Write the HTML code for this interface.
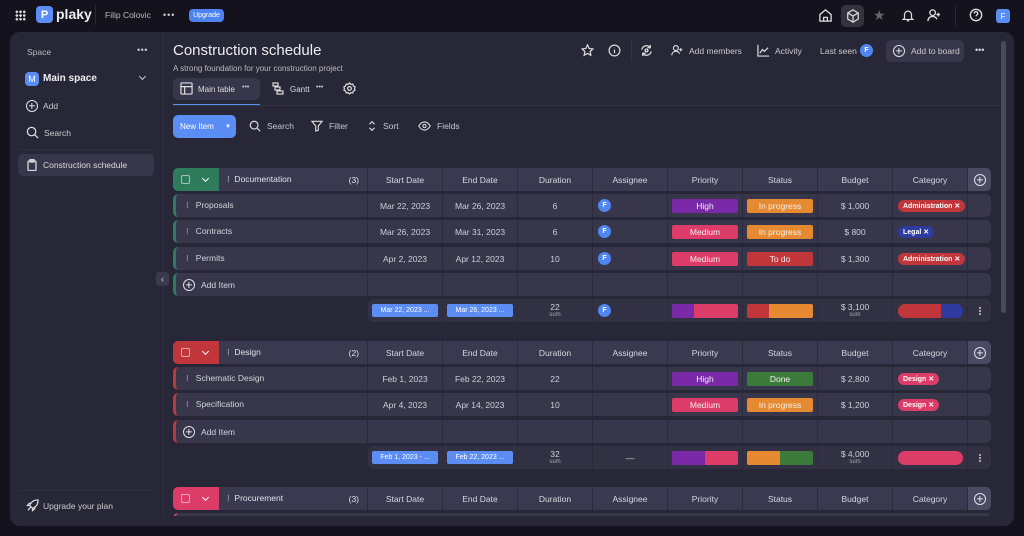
<!DOCTYPE html>
<html><head><meta charset="utf-8"><style>
*{margin:0;padding:0;box-sizing:border-box}
body{width:1024px;height:536px;background:#14131d;font-family:"Liberation Sans",sans-serif;color:#d4d4dc;position:relative;overflow:hidden;font-size:9px;white-space:nowrap}
.a{position:absolute}
.panel{left:10px;top:32px;width:1004px;height:494px;background:#272737;border-radius:10px;overflow:hidden}
.row{position:absolute;left:173px;width:818px;height:23px;background:#37364a;border-radius:5px;display:flex;overflow:hidden}
.row .c{width:75px;border-right:1px solid #2c2b3c;display:flex;align-items:center;justify-content:center;color:#cfcfd8;font-size:8.5px}
.row .n{width:192px;border-right:1px solid #2c2b3c;display:flex;align-items:center;padding-left:10px;color:#d4d4dc;font-size:8.5px}
.row .e{flex:1}
.hdr{position:absolute;left:173px;width:818px;height:23px;background:#3a394f;border-radius:5px;display:flex;overflow:hidden}
.hdr .cb{width:46px;display:flex;align-items:center;padding-left:8px;gap:13px}
.hdr .cb i{display:block;width:9px;height:9px;border:1px solid rgba(255,255,255,.55);border-radius:2px}
.hdr .cb b{display:block;width:5px;height:5px;border-right:1.5px solid #fff;border-bottom:1.5px solid #fff;transform:rotate(45deg);margin-top:-3px}
.hdr .nm{width:149px;border-right:1px solid #2c2b3c;display:flex;align-items:center;padding-left:8px;font-size:8.5px;color:#e2e2ea}
.hdr .nm span{margin-left:auto;margin-right:8px}
.hdr .c{width:75px;border-right:1px solid #2c2b3c;display:flex;align-items:center;justify-content:center;font-size:8.5px;color:#d8d8e0}
.hdr .p{flex:1;background:#4b4a62;display:flex;align-items:center;justify-content:center}
.plus{width:12px;height:12px;border:1.3px solid #e0e0e8;border-radius:50%;position:relative;flex:none}
.plus:before,.plus:after{content:"";position:absolute;background:#e0e0e8;left:50%;top:50%;transform:translate(-50%,-50%)}
.plus:before{width:6px;height:1.3px}.plus:after{width:1.3px;height:6px}
.pill{width:66px;height:14px;border-radius:2px;display:flex;align-items:center;justify-content:center;color:#f2f2f2;font-size:8.5px}
.av{width:13px;height:13px;border-radius:50%;background:#4f86f0;color:#fff;font-size:7px;display:flex;align-items:center;justify-content:center;font-weight:bold}
.tag{height:12px;border-radius:6px;padding:0 5px;display:inline-flex;align-items:center;color:#fff;font-size:7px;font-weight:bold}
.row .cat{justify-content:flex-start;padding-left:5px}
.sum{position:absolute;left:368px;width:623px;height:23px;background:#323144;border-radius:5px;display:flex}
.sum .c{width:75px;display:flex;align-items:center;justify-content:center;flex-direction:column;font-size:8.5px;color:#cfcfd8;line-height:8px;border-right:1px solid #2c2b3c}
.sum .c small{font-size:6px;color:#a8a8b4}
.db{width:66px;height:13px;background:#5b8df3;border-radius:2px;color:#fff;font-size:7px;display:flex;align-items:center;justify-content:center}
.bar{width:66px;height:14px;border-radius:2px;display:flex;overflow:hidden}
.dots{width:2px;height:2px;background:#ccc;border-radius:50%;box-shadow:0 -3px 0 #ccc,0 3px 0 #ccc}
.tb{display:flex;align-items:center;gap:6px;color:#c8c8d2;font-size:8.5px}
</style></head><body>
<div class="a" style="left:15px;top:10px;width:11px;height:11px;background:radial-gradient(circle,#ddd 1.2px,transparent 1.4px) 0 0/3.7px 3.7px"></div>
<div class="a" style="left:36px;top:6px;width:17px;height:17px;background:#5a8ef5;border-radius:4px;color:#fff;font-size:11px;font-weight:bold;display:flex;align-items:center;justify-content:center">P</div>
<div class="a" style="left:56px;top:6px;font-size:14px;color:#eee;font-weight:bold">plaky</div>
<div class="a" style="left:95px;top:5px;width:1px;height:20px;background:#2a2936"></div>
<div class="a" style="left:105px;top:10px;font-size:8.5px;color:#bbb">Filip Colovic</div>
<div class="a" style="left:163px;top:10px;font-size:9px;color:#ccc;letter-spacing:1px">•••</div>
<div class="a" style="left:189px;top:9px;width:35px;height:13px;background:#4d83ee;border-radius:4px;font-size:7px;color:#fff;display:flex;align-items:center;justify-content:center">Upgrade</div>
<svg class="a" style="left:818px;top:8px" width="15" height="15" viewBox="0 0 16 16" fill="none" stroke="#ddd" stroke-width="1.4"><path d="M2 7l6-5 6 5v7H2z M6 14v-4h4v4"/></svg>
<div class="a" style="left:841px;top:5px;width:23px;height:22px;background:#33323f;border-radius:5px"></div>
<svg class="a" style="left:846px;top:9px" width="14" height="14" viewBox="0 0 16 16" fill="none" stroke="#ddd" stroke-width="1.4"><path d="M8 1l6 3.5v7L8 15l-6-3.5v-7z M2 4.5L8 8l6-3.5 M8 8v7"/></svg>
<div class="a" style="left:873px;top:7px;font-size:14px;color:#666">★</div>
<svg class="a" style="left:901px;top:8px" width="14" height="15" viewBox="0 0 16 16" fill="none" stroke="#ddd" stroke-width="1.4"><path d="M4 11V7a4 4 0 018 0v4l1.5 1.5h-11z M6.5 14h3"/></svg>
<svg class="a" style="left:927px;top:8px" width="15" height="15" viewBox="0 0 16 16" fill="none" stroke="#ddd" stroke-width="1.4"><circle cx="6" cy="5" r="3"/><path d="M1 14c0-3 2-5 5-5s4 1.5 4.5 3 M12 5v4 M10 7h4"/></svg>
<div class="a" style="left:955px;top:5px;width:1px;height:22px;background:#2a2936"></div>
<svg class="a" style="left:969px;top:8px" width="14" height="14" viewBox="0 0 16 16" fill="none" stroke="#ddd" stroke-width="1.5"><circle cx="8" cy="8" r="6.5"/><path d="M6 6.3a2 2 0 113 1.6c-.7.4-1 .8-1 1.6 M8 11.5v.5"/></svg>
<div class="a" style="left:996px;top:9px;width:14px;height:14px;background:#5a8ef5;border-radius:3px;color:#fff;font-size:8px;display:flex;align-items:center;justify-content:center">F</div>

<div class="a panel"></div>
<div class="a" style="left:163px;top:32px;width:1px;height:490px;background:#31303f"></div>
<div class="a" style="left:27px;top:47px;font-size:8.5px;color:#bbb">Space</div>
<div class="a" style="left:137px;top:45px;font-size:9px;color:#ccc;letter-spacing:.5px">•••</div>
<div class="a" style="left:25px;top:72px;width:14px;height:14px;background:#5a8ef5;border-radius:4px;color:#fff;font-size:9px;display:flex;align-items:center;justify-content:center">M</div>
<div class="a" style="left:43px;top:73px;font-size:10px;color:#eee;font-weight:bold">Main space</div>
<div class="a" style="left:140px;top:74px;width:5px;height:5px;border-right:1.3px solid #ccc;border-bottom:1.3px solid #ccc;transform:rotate(45deg)"></div>
<div class="plus" style="position:absolute;left:26px;top:100px"></div>
<div class="a" style="left:43px;top:101px;font-size:8.5px;color:#ccc">Add</div>
<svg class="a" style="left:26px;top:126px" width="13" height="13" viewBox="0 0 14 14" fill="none" stroke="#ddd" stroke-width="1.4"><circle cx="6" cy="6" r="4.5"/><path d="M9.5 9.5L13 13"/></svg>
<div class="a" style="left:44px;top:128px;font-size:8.5px;color:#ccc">Search</div>
<div class="a" style="left:18px;top:149px;width:136px;height:1px;background:#31303f"></div>
<div class="a" style="left:18px;top:154px;width:136px;height:22px;background:#37364a;border-radius:5px"></div>
<svg class="a" style="left:27px;top:159px" width="10" height="12" viewBox="0 0 10 12" fill="none" stroke="#ddd" stroke-width="1.3"><rect x="1" y="2" width="8" height="9.5" rx="1"/><rect x="3" y=".7" width="4" height="2.3"/></svg>
<div class="a" style="left:43px;top:160px;font-size:8.5px;color:#ddd">Construction schedule</div>
<div class="a" style="left:18px;top:490px;width:136px;height:1px;background:#31303f"></div>
<svg class="a" style="left:26px;top:499px" width="13" height="13" viewBox="0 0 14 14" fill="none" stroke="#ddd" stroke-width="1.3"><path d="M5 9l-3 3 M4 7c2-5 5-6 9-6 0 4-1 7-6 9z M4 7H1.5l2-2.5H6 M7 10v2.5l2.5-2V8"/></svg>
<div class="a" style="left:43px;top:501px;font-size:8.5px;color:#ccc">Upgrade your plan</div>
<div class="a" style="left:156px;top:272px;width:13px;height:14px;background:#3a394d;border-radius:3px;color:#ddd;font-size:9px;display:flex;align-items:center;justify-content:center">‹</div>

<div class="a" style="left:173px;top:42px;font-size:15px;color:#eee">Construction schedule</div>
<div class="a" style="left:173px;top:64px;font-size:8px;color:#bbb">A strong foundation for your construction project</div>
<div class="a" style="left:173px;top:78px;width:87px;height:22px;background:#37364a;border-radius:5px"></div>
<div class="a" style="left:173px;top:104px;width:87px;height:1px;background:#5a8ef5"></div>
<div class="a" style="left:173px;top:105px;width:833px;height:1px;background:#34334a"></div>
<svg class="a" style="left:180px;top:82px" width="13" height="13" viewBox="0 0 14 14" fill="none" stroke="#ddd" stroke-width="1.3"><rect x="1" y="1" width="12" height="12" rx="1"/><path d="M1 5h12 M5 5v8"/></svg>
<div class="a" style="left:198px;top:85px;font-size:8px;color:#ddd">Main table</div>
<div class="a" style="left:242px;top:84px;font-size:7px;color:#ccc">•••</div>
<svg class="a" style="left:272px;top:82px" width="12" height="13" viewBox="0 0 12 13" fill="none" stroke="#ddd" stroke-width="1.2"><rect x="1" y="1" width="5" height="3"/><rect x="3" y="5" width="5" height="3"/><rect x="5" y="9" width="6" height="3"/></svg>
<div class="a" style="left:290px;top:85px;font-size:8px;color:#ddd">Gantt</div>
<div class="a" style="left:316px;top:84px;font-size:7px;color:#ccc">•••</div>
<svg class="a" style="left:343px;top:82px" width="13" height="13" viewBox="0 0 14 14" fill="none" stroke="#ddd" stroke-width="1.3"><circle cx="7" cy="7" r="2"/><path d="M7 1l1.5 1.5 2-.3.6 2 1.9 1.1-.6 1.7.6 1.7-1.9 1.1-.6 2-2-.3L7 13l-1.5-1.5-2 .3-.6-2L1 8.7 1.6 7 1 5.3l1.9-1.1.6-2 2 .3z"/></svg>

<svg class="a" style="left:581px;top:44px" width="13" height="13" viewBox="0 0 14 14" fill="none" stroke="#ddd" stroke-width="1.3"><path d="M7 1l1.8 3.8 4 .5-3 2.8.8 4L7 10.2 3.4 12.1l.8-4-3-2.8 4-.5z"/></svg>
<svg class="a" style="left:608px;top:44px" width="13" height="13" viewBox="0 0 14 14" fill="none" stroke="#ddd" stroke-width="1.3"><circle cx="7" cy="7" r="5.8"/><path d="M7 6v4 M7 4v.5"/></svg>
<div class="a" style="left:631px;top:40px;width:1px;height:22px;background:#34334a"></div>
<svg class="a" style="left:640px;top:44px" width="13" height="13" viewBox="0 0 14 14" fill="none" stroke="#ddd" stroke-width="1.4"><path d="M2 6a5 5 0 019-2 M12 8a5 5 0 01-9 2 M11 1v3H8 M3 13v-3h3"/><circle cx="7" cy="7" r="1.5"/></svg>
<svg class="a" style="left:671px;top:44px" width="13" height="13" viewBox="0 0 16 16" fill="none" stroke="#ddd" stroke-width="1.4"><circle cx="6" cy="5" r="3"/><path d="M1 14c0-3 2-5 5-5s4 1.5 4.5 3 M12 5v4 M10 7h4"/></svg>
<div class="a" style="left:689px;top:46px;font-size:8.5px;color:#ccc">Add members</div>
<svg class="a" style="left:757px;top:44px" width="13" height="13" viewBox="0 0 14 14" fill="none" stroke="#ddd" stroke-width="1.3"><path d="M1 1v12h12 M3 10l3-4 2 2 4-4"/></svg>
<div class="a" style="left:775px;top:46px;font-size:8.5px;color:#ccc">Activity</div>
<div class="a" style="left:820px;top:46px;font-size:8.5px;color:#ccc">Last seen</div>
<div class="a av" style="left:860px;top:44px">F</div>
<div class="a" style="left:886px;top:40px;width:78px;height:22px;background:#37364a;border-radius:5px"></div>
<div class="plus" style="position:absolute;left:893px;top:45px"></div>
<div class="a" style="left:911px;top:46px;font-size:8.5px;color:#ccc">Add to board</div>
<div class="a" style="left:975px;top:45px;font-size:9px;color:#ddd">•••</div>
<div class="a" style="left:1001px;top:41px;width:5px;height:272px;background:#4a4a5c;border-radius:3px"></div>

<div class="a" style="left:173px;top:115px;width:63px;height:23px;background:#5a8ef5;border-radius:5px;color:#fff;font-size:8px;display:flex;align-items:center;padding-left:7px">New Item<span style="margin-left:auto;margin-right:5px;font-size:6px">▼</span></div>
<div class="a tb" style="left:249px;top:120px"><svg width="12" height="12" viewBox="0 0 14 14" fill="none" stroke="#ddd" stroke-width="1.4"><circle cx="6" cy="6" r="4.5"/><path d="M9.5 9.5L13 13"/></svg>Search</div>
<div class="a tb" style="left:311px;top:120px"><svg width="12" height="12" viewBox="0 0 14 14" fill="none" stroke="#ddd" stroke-width="1.3"><path d="M1 1.5h12L8.5 7v5l-3 1V7z"/></svg>Filter</div>
<div class="a tb" style="left:367px;top:120px"><svg width="10" height="12" viewBox="0 0 10 14" fill="none" stroke="#ddd" stroke-width="1.3"><path d="M2 5l3-3 3 3 M2 9l3 3 3-3"/></svg>Sort</div>
<div class="a tb" style="left:418px;top:120px"><svg width="13" height="12" viewBox="0 0 16 12" fill="none" stroke="#ddd" stroke-width="1.3"><path d="M1 6c2-3.5 4-5 7-5s5 1.5 7 5c-2 3.5-4 5-7 5S3 9.5 1 6z"/><circle cx="8" cy="6" r="2"/></svg>Fields</div>

<div class="hdr" style="top:168px"><div class="cb" style="background:#2e7c5c"><i></i><b></b></div><div class="nm">⁝&nbsp;&nbsp;Documentation<span>(3)</span></div><div class="c">Start Date</div><div class="c">End Date</div><div class="c">Duration</div><div class="c">Assignee</div><div class="c">Priority</div><div class="c">Status</div><div class="c">Budget</div><div class="c">Category</div><div class="p"><div class="plus"></div></div></div>
<div class="row" style="top:194px;border-left:3px solid #2e7c5c"><div class="n">⁝&nbsp;&nbsp;&nbsp;Proposals</div><div class="c">Mar 22, 2023</div><div class="c">Mar 26, 2023</div><div class="c">6</div><div class="c" style="justify-content:flex-start;padding-left:5px"><div class="av">F</div></div><div class="c"><div class="pill" style="background:#7a2aa8">High</div></div><div class="c"><div class="pill" style="background:#e58a30">In progress</div></div><div class="c">$ 1,000</div><div class="c cat"><span class="tag" style="background:#c0363a">Administration ✕</span></div><div class="e"></div></div>
<div class="row" style="top:220px;border-left:3px solid #2e7c5c"><div class="n">⁝&nbsp;&nbsp;&nbsp;Contracts</div><div class="c">Mar 26, 2023</div><div class="c">Mar 31, 2023</div><div class="c">6</div><div class="c" style="justify-content:flex-start;padding-left:5px"><div class="av">F</div></div><div class="c"><div class="pill" style="background:#dc3c68">Medium</div></div><div class="c"><div class="pill" style="background:#e58a30">In progress</div></div><div class="c">$ 800</div><div class="c cat"><span class="tag" style="background:#2e3a9e">Legal ✕</span></div><div class="e"></div></div>
<div class="row" style="top:247px;border-left:3px solid #2e7c5c"><div class="n">⁝&nbsp;&nbsp;&nbsp;Permits</div><div class="c">Apr 2, 2023</div><div class="c">Apr 12, 2023</div><div class="c">10</div><div class="c" style="justify-content:flex-start;padding-left:5px"><div class="av">F</div></div><div class="c"><div class="pill" style="background:#dc3c68">Medium</div></div><div class="c"><div class="pill" style="background:#c0363a">To do</div></div><div class="c">$ 1,300</div><div class="c cat"><span class="tag" style="background:#c0363a">Administration ✕</span></div><div class="e"></div></div>
<div class="row" style="top:273px;border-left:3px solid #2e7c5c"><div class="n" style="padding-left:7px"><div class="plus" style="margin-right:6px"></div>Add Item</div><div class="c"></div><div class="c"></div><div class="c"></div><div class="c"></div><div class="c"></div><div class="c"></div><div class="c"></div><div class="c"></div><div class="e"></div></div>
<div class="sum" style="top:299px"><div class="c"><div class="db">Mar 22, 2023 ...</div></div><div class="c"><div class="db">Mar 26, 2023 ...</div></div><div class="c">22<small>sum</small></div><div class="c" style="align-items:flex-start;padding-left:5px"><div class="av">F</div></div><div class="c"><div class="bar"><i style="width:22px;background:#7a2aa8"></i><i style="flex:1;background:#dc3c68"></i></div></div><div class="c"><div class="bar"><i style="width:22px;background:#c0363a"></i><i style="flex:1;background:#e58a30"></i></div></div><div class="c">$ 3,100<small>sum</small></div><div class="c"><div class="bar" style="border-radius:7px;width:65px"><i style="width:43px;background:#c0363a"></i><i style="flex:1;background:#2e3a9e"></i></div></div><div style="flex:1;display:flex;align-items:center;justify-content:center"><div class="dots"></div></div></div>

<div class="hdr" style="top:341px"><div class="cb" style="background:#c0363a"><i></i><b></b></div><div class="nm">⁝&nbsp;&nbsp;Design<span>(2)</span></div><div class="c">Start Date</div><div class="c">End Date</div><div class="c">Duration</div><div class="c">Assignee</div><div class="c">Priority</div><div class="c">Status</div><div class="c">Budget</div><div class="c">Category</div><div class="p"><div class="plus"></div></div></div>
<div class="row" style="top:367px;border-left:3px solid #c0363a"><div class="n">⁝&nbsp;&nbsp;&nbsp;Schematic Design</div><div class="c">Feb 1, 2023</div><div class="c">Feb 22, 2023</div><div class="c">22</div><div class="c"></div><div class="c"><div class="pill" style="background:#7a2aa8">High</div></div><div class="c"><div class="pill" style="background:#3b7a3a">Done</div></div><div class="c">$ 2,800</div><div class="c cat"><span class="tag" style="background:#dc3c68">Design ✕</span></div><div class="e"></div></div>
<div class="row" style="top:393px;border-left:3px solid #c0363a"><div class="n">⁝&nbsp;&nbsp;&nbsp;Specification</div><div class="c">Apr 4, 2023</div><div class="c">Apr 14, 2023</div><div class="c">10</div><div class="c"></div><div class="c"><div class="pill" style="background:#dc3c68">Medium</div></div><div class="c"><div class="pill" style="background:#e58a30">In progress</div></div><div class="c">$ 1,200</div><div class="c cat"><span class="tag" style="background:#dc3c68">Design ✕</span></div><div class="e"></div></div>
<div class="row" style="top:420px;border-left:3px solid #c0363a"><div class="n" style="padding-left:7px"><div class="plus" style="margin-right:6px"></div>Add Item</div><div class="c"></div><div class="c"></div><div class="c"></div><div class="c"></div><div class="c"></div><div class="c"></div><div class="c"></div><div class="c"></div><div class="e"></div></div>
<div class="sum" style="top:446px"><div class="c"><div class="db">Feb 1, 2023 - ...</div></div><div class="c"><div class="db">Feb 22, 2023 ...</div></div><div class="c">32<small>sum</small></div><div class="c">—</div><div class="c"><div class="bar"><i style="width:33px;background:#7a2aa8"></i><i style="flex:1;background:#dc3c68"></i></div></div><div class="c"><div class="bar"><i style="width:33px;background:#e58a30"></i><i style="flex:1;background:#3b7a3a"></i></div></div><div class="c">$ 4,000<small>sum</small></div><div class="c"><div class="bar" style="border-radius:7px;width:65px;background:#dc3c68"></div></div><div style="flex:1;display:flex;align-items:center;justify-content:center"><div class="dots"></div></div></div>

<div class="hdr" style="top:487px"><div class="cb" style="background:#dc3c68"><i></i><b></b></div><div class="nm">⁝&nbsp;&nbsp;Procurement<span>(3)</span></div><div class="c">Start Date</div><div class="c">End Date</div><div class="c">Duration</div><div class="c">Assignee</div><div class="c">Priority</div><div class="c">Status</div><div class="c">Budget</div><div class="c">Category</div><div class="p"><div class="plus"></div></div></div>
<div class="row" style="top:513px;height:8px;border-left:3px solid #dc3c68;border-radius:5px 5px 0 0"></div>
<div class="a" style="left:0;top:522px;width:1024px;height:14px;background:#14131d"></div>
<div class="a" style="left:10px;top:516px;width:1004px;height:10px;background:#272737;border-radius:0 0 10px 10px"></div>
</body></html>
